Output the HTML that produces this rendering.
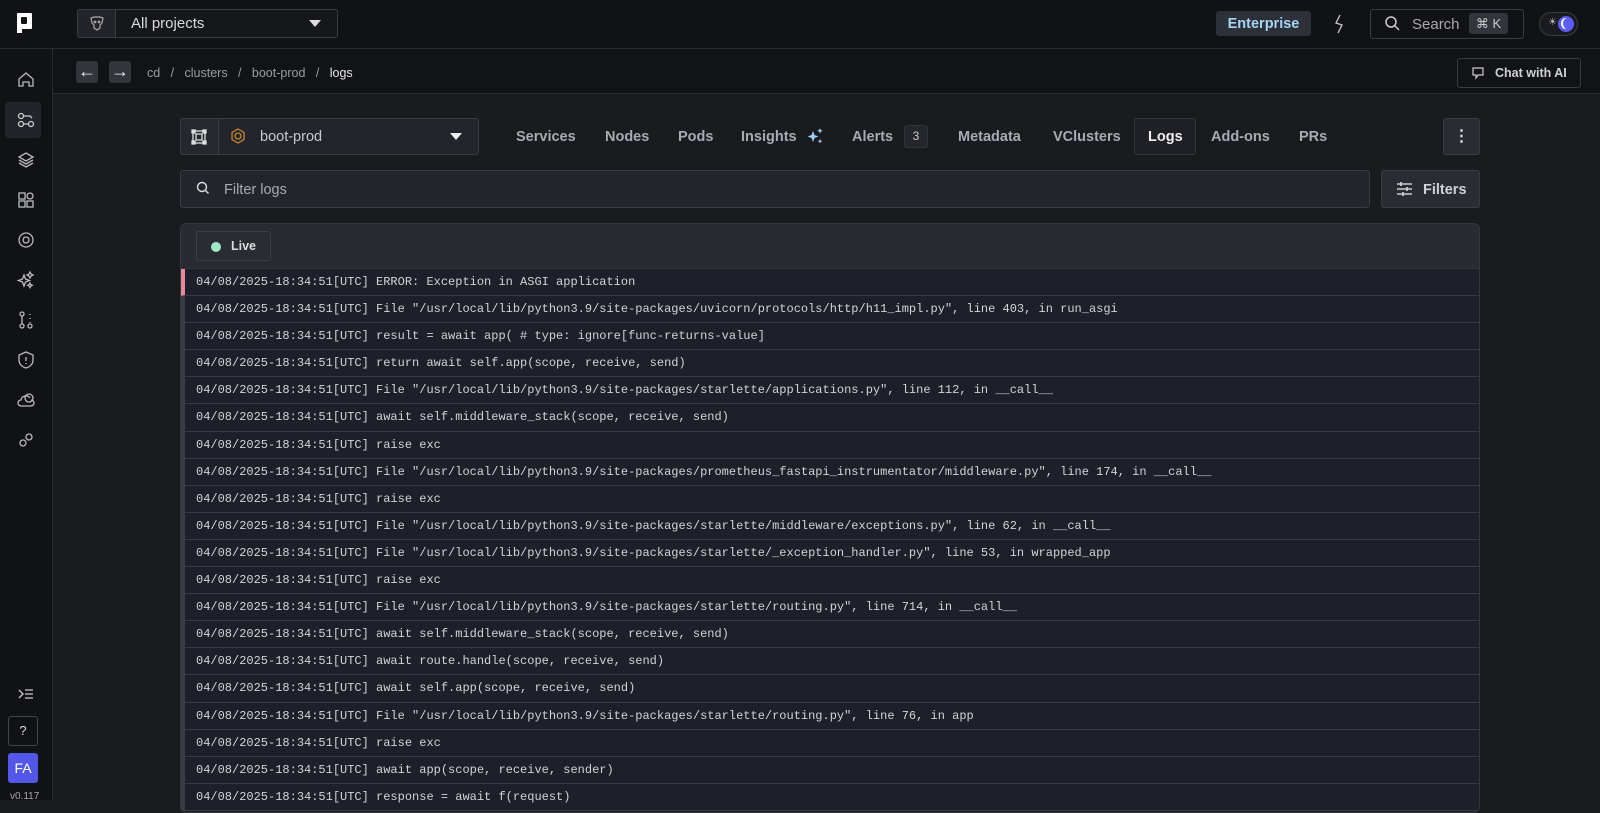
<!DOCTYPE html>
<html><head><meta charset="utf-8"><style>
*{box-sizing:border-box;margin:0;padding:0}
body{width:1600px;height:800px;overflow:hidden;background:#1a1b1f;font-family:"Liberation Sans",sans-serif;color:#c9cad0;position:relative}
.abs{position:absolute}
.top{left:0;top:0;width:1600px;height:49px;background:#111216;border-bottom:1px solid #2a2b31}
.side{left:0;top:49px;width:53px;height:751px;background:#111216;border-right:1px solid #2a2b31}
.crumb{left:53px;top:49px;width:1547px;height:45px;background:#121317;border-bottom:1px solid #2a2b31}
.ic{position:absolute;left:14px;width:24px;height:24px}
svg{display:block}
.tab{position:absolute;top:129px;font-size:14.5px;font-weight:bold;color:#a9abb4}
.logs{left:180px;top:223px;width:1300px;height:590px;border:1px solid #34363e;border-radius:6px;background:#1e2029;overflow:hidden}
.hdr{height:45px;background:#292b33;border-bottom:1px solid #34363e;position:relative}
.row{height:27.1px;border-bottom:1px solid #383a43;border-left:4px solid #3a3c45;font-family:"Liberation Mono",monospace;font-size:12px;line-height:26px;padding-left:11px;color:#d2d3d8;white-space:pre}
</style></head><body>
<div class="abs top"></div>
<div class="abs side"></div>
<div class="abs crumb"></div>
<!-- logo -->
<div class="abs" style="left:17px;top:13px;width:15px;height:16px;background:#fff;border-radius:1px"></div>
<div class="abs" style="left:17px;top:27px;width:5px;height:6px;background:#fff"></div>
<div class="abs" style="left:21px;top:17px;width:6px;height:7px;background:#111216;border-radius:1px"></div>
<!-- project selector -->
<div class="abs" style="left:77px;top:9px;width:261px;height:29px;border:1px solid #3a3c44;border-radius:3px;background:#16171b"></div>
<div class="abs" style="left:77px;top:9px;width:39px;height:29px;border:1px solid #3a3c44;border-radius:3px 0 0 3px;background:#22242a"></div>
<svg class="abs" style="left:88px;top:14px" width="18" height="18" viewBox="0 0 18 18" fill="none" stroke="#aaa" stroke-width="1.2"><path d="M3 4l3-1h6l3 1-1 5-2 2v3l-3 2-3-2v-3L4 9z"/><circle cx="7" cy="8" r=".8"/><circle cx="11" cy="8" r=".8"/></svg>
<div class="abs" style="left:131px;top:15px;font-size:15px;color:#d8d9de">All projects</div>
<div class="abs" style="left:309px;top:20px;border-left:6px solid transparent;border-right:6px solid transparent;border-top:7px solid #ddd"></div>
<!-- right top -->
<div class="abs" style="left:1216px;top:11px;width:95px;height:25px;background:#2b3039;border-radius:3px;color:#a8d4f4;font-weight:bold;font-size:14.5px;text-align:center;line-height:26px">Enterprise</div>
<svg class="abs" style="left:1333px;top:14px" width="12" height="20" viewBox="0 0 12 20" fill="none" stroke="#ccc" stroke-width="1.3"><path d="M7 1L3 9l6 2-4 8"/></svg>
<div class="abs" style="left:1370px;top:9px;width:154px;height:30px;border:1px solid #3a3c44;border-radius:3px"></div>
<svg class="abs" style="left:1384px;top:15px" width="18" height="18" viewBox="0 0 18 18" fill="none" stroke="#ccc" stroke-width="1.5"><circle cx="7" cy="7" r="5"/><path d="M11 11l4 4"/></svg>
<div class="abs" style="left:1412px;top:16px;font-size:15px;color:#aaa">Search</div>
<div class="abs" style="left:1469px;top:13px;width:39px;height:21px;background:#33353d;border-radius:3px;font-size:13px;color:#ccc;text-align:center;line-height:22px">⌘ K</div>
<div class="abs" style="left:1539px;top:12px;width:39px;height:24px;border:1px solid #3a3c44;border-radius:12px;background:#1a1b20"></div>
<div class="abs" style="left:1548px;top:17px;font-size:10px;color:#bbb">☀</div>
<div class="abs" style="left:1558px;top:16px;width:16px;height:16px;border-radius:50%;background:#5b5ef0"></div>
<div class="abs" style="left:1563px;top:18px;width:9px;height:11px;border-radius:50%;box-shadow:-2px 0 0 0 #fff"></div>
<!-- breadcrumb -->
<div class="abs" style="left:76px;top:61px;width:22px;height:22px;background:#33353d;border-radius:3px;color:#eee;font-size:18px;text-align:center;line-height:21px">←</div>
<div class="abs" style="left:109px;top:61px;width:22px;height:22px;background:#33353d;border-radius:3px;color:#eee;font-size:18px;text-align:center;line-height:21px">→</div>
<div class="abs" style="left:147px;top:66px;font-size:12.5px;color:#9a9ca4">cd &nbsp; / &nbsp; clusters &nbsp; / &nbsp; boot-prod &nbsp; / &nbsp; <span style="color:#e6e7ea">logs</span></div>
<div class="abs" style="left:1457px;top:58px;width:124px;height:30px;border:1px solid #3a3c44;border-radius:3px;font-size:12.5px;font-weight:bold;color:#d0d1d6;line-height:29px;padding-left:37px">Chat with AI</div>
<svg class="abs" style="left:1471px;top:66px" width="14" height="14" viewBox="0 0 14 14" fill="none" stroke="#ccc" stroke-width="1.2"><path d="M2 2h10v7H7l-2 3V9H2z"/></svg>
<!-- sidebar icons -->
<svg class="ic" style="top:68px" viewBox="0 0 24 24" fill="none" stroke="#bbb" stroke-width="1.3"><path d="M5 11l7-6 7 6v7h-4v-4h-6v4H5z"/></svg>
<div class="abs" style="left:5px;top:102px;width:36px;height:36px;background:#22242b;border-radius:3px"></div>
<svg class="ic" style="top:108px" viewBox="0 0 24 24" fill="none" stroke="#ccc" stroke-width="1.3"><circle cx="7" cy="8" r="2.5"/><circle cx="7" cy="16" r="2.5"/><circle cx="17" cy="16" r="2.5"/><path d="M10 8h6l2 2M10 16h4"/></svg>
<svg class="ic" style="top:148px" viewBox="0 0 24 24" fill="none" stroke="#bbb" stroke-width="1.3"><path d="M12 5l7 4-7 4-7-4zM5 12l7 4 7-4M5 15l7 4 7-4"/></svg>
<svg class="ic" style="top:188px" viewBox="0 0 24 24" fill="none" stroke="#bbb" stroke-width="1.3"><rect x="5" y="5" width="6" height="6"/><rect x="5" y="13" width="6" height="6"/><rect x="13" y="13" width="6" height="6"/><circle cx="16" cy="8" r="3"/></svg>
<svg class="ic" style="top:228px" viewBox="0 0 24 24" fill="none" stroke="#bbb" stroke-width="1.3"><circle cx="12" cy="12" r="7"/><circle cx="12" cy="12" r="3"/></svg>
<svg class="ic" style="top:268px" viewBox="0 0 24 24" fill="none" stroke="#bbb" stroke-width="1.3"><path d="M10 7l1.5 4 4 1.5-4 1.5-1.5 4-1.5-4-4-1.5 4-1.5zM16 4l1 2 2 1-2 1-1 2-1-2-2-1 2-1zM16 15l.8 1.5 1.5.8-1.5.8-.8 1.5-.8-1.5-1.5-.8 1.5-.8z"/></svg>
<svg class="ic" style="top:308px" viewBox="0 0 24 24" fill="none" stroke="#bbb" stroke-width="1.3"><circle cx="8" cy="6" r="2"/><circle cx="8" cy="18" r="2"/><path d="M8 8v8"/><circle cx="16" cy="18" r="2"/><path d="M16 6v1M16 10v1M16 14v1"/></svg>
<svg class="ic" style="top:348px" viewBox="0 0 24 24" fill="none" stroke="#bbb" stroke-width="1.3"><path d="M12 4l7 3v5c0 4-3 7-7 8-4-1-7-4-7-8V7z"/><path d="M12 9v4M12 15v1"/></svg>
<svg class="ic" style="top:388px" viewBox="0 0 24 24" fill="none" stroke="#bbb" stroke-width="1.3"><path d="M7 18a3 3 0 010-6 5 5 0 019-2M7 18h10a3 3 0 000-6"/><circle cx="15" cy="10" r="4"/></svg>
<svg class="ic" style="top:428px" viewBox="0 0 24 24" fill="none" stroke="#bbb" stroke-width="1.3"><circle cx="9" cy="15" r="3"/><circle cx="15" cy="9" r="3"/></svg>
<svg class="ic" style="top:683px" viewBox="0 0 24 24" fill="none" stroke="#ccc" stroke-width="1.3"><path d="M5 7l4 4-4 4M11 7h8M11 11h8M11 15h8"/></svg>
<div class="abs" style="left:8px;top:716px;width:30px;height:30px;border:1px solid #44464e;border-radius:3px;text-align:center;line-height:28px;font-size:13px;color:#ddd">?</div>
<div class="abs" style="left:8px;top:753px;width:30px;height:30px;background:#5357e8;border-radius:3px;text-align:center;line-height:30px;font-size:14px;color:#fff">FA</div>
<div class="abs" style="left:10px;top:791px;font-size:10px;color:#aaa">v0.117</div>
<!-- cluster selector -->
<div class="abs" style="left:180px;top:118px;width:299px;height:37px;border:1px solid #3a3c44;border-radius:3px;background:#23252c"></div>
<div class="abs" style="left:180px;top:118px;width:39px;height:37px;border:1px solid #3a3c44;border-radius:3px 0 0 3px;background:#26282f"></div>
<svg class="abs" style="left:191px;top:129px" width="16" height="16" viewBox="0 0 16 16" fill="none" stroke="#ddd" stroke-width="1.3"><rect x="2" y="2" width="12" height="12"/><rect x="5" y="5" width="6" height="6"/><rect x="1" y="1" width="3" height="3" fill="#ddd"/><rect x="12" y="1" width="3" height="3" fill="#ddd"/><rect x="1" y="12" width="3" height="3" fill="#ddd"/><rect x="12" y="12" width="3" height="3" fill="#ddd"/></svg>
<svg class="abs" style="left:230px;top:128px" width="16" height="16" viewBox="0 0 16 16" fill="none" stroke="#c8842e" stroke-width="1.3"><path d="M8 1l6 3.5v7L8 15l-6-3.5v-7z"/><circle cx="8" cy="8" r="3"/></svg>
<div class="abs" style="left:260px;top:129px;font-size:14.5px;color:#c8c9ce">boot-prod</div>
<div class="abs" style="left:450px;top:133px;border-left:6px solid transparent;border-right:6px solid transparent;border-top:7px solid #eee"></div>
<!-- tabs -->
<div class="tab" style="left:516px">Services</div>
<div class="tab" style="left:605px">Nodes</div>
<div class="tab" style="left:678px">Pods</div>
<div class="tab" style="left:741px">Insights</div>
<svg class="abs" style="left:806px;top:127px" width="18" height="18" viewBox="0 0 18 18" fill="#9ad0f5"><path d="M7 4l1.5 4 4 1.5-4 1.5L7 15l-1.5-4-4-1.5 4-1.5zM14 1l.8 2 2 .8-2 .8-.8 2-.8-2-2-.8 2-.8zM14 12l.7 1.5 1.5.7-1.5.7-.7 1.5-.7-1.5-1.5-.7 1.5-.7z"/></svg>
<div class="tab" style="left:852px">Alerts</div>
<div class="abs" style="left:904px;top:125px;width:24px;height:23px;background:#24262c;border:1px solid #33353c;border-radius:3px;font-size:12px;text-align:center;line-height:21px;color:#ccc">3</div>
<div class="tab" style="left:958px">Metadata</div>
<div class="tab" style="left:1053px">VClusters</div>
<div class="abs" style="left:1134px;top:118px;width:62px;height:37px;border:1px solid #33353c;border-radius:3px;background:#1e2026"></div>
<div class="tab" style="left:1148px;color:#eee">Logs</div>
<div class="tab" style="left:1211px">Add-ons</div>
<div class="tab" style="left:1299px">PRs</div>
<div class="abs" style="left:1443px;top:118px;width:37px;height:37px;border:1px solid #3a3c44;border-radius:3px;background:#2a2c33;color:#ddd;text-align:center;line-height:35px;font-size:16px;font-weight:bold">⋮</div>
<!-- filter -->
<div class="abs" style="left:180px;top:170px;width:1190px;height:38px;border:1px solid #3a3c44;border-radius:3px;background:#23252d"></div>
<svg class="abs" style="left:196px;top:181px" width="16" height="16" viewBox="0 0 16 16" fill="none" stroke="#ddd" stroke-width="1.4"><circle cx="6" cy="6" r="4.5"/><path d="M9.5 9.5l3 3"/></svg>
<div class="abs" style="left:224px;top:182px;font-size:14.5px;color:#a8aab2">Filter logs</div>
<div class="abs" style="left:1381px;top:170px;width:99px;height:38px;border:1px solid #3a3c44;border-radius:3px;background:#2a2c33"></div>
<svg class="abs" style="left:1396px;top:181px" width="17" height="16" viewBox="0 0 17 16" fill="none" stroke="#ccc" stroke-width="1.4"><path d="M1 3h15M1 8h15M1 13h15"/><path d="M5 1v4M11 6v4M7 11v4" stroke-width="1.8"/></svg>
<div class="abs" style="left:1423px;top:182px;font-size:14.5px;font-weight:bold;color:#d0d1d6">Filters</div>
<!-- logs -->
<div class="abs logs">
<div class="hdr"><div style="position:absolute;left:15px;top:7px;width:75px;height:30px;border:1px solid #3d3f47;border-radius:3px;background:#2a2c33"><div style="position:absolute;left:14px;top:10px;width:10px;height:10px;border-radius:50%;background:#9ee8c8"></div><div style="position:absolute;left:34px;top:7px;font-size:12.5px;font-weight:bold;color:#ddd">Live</div></div></div>
<div class="row" style="border-left-color:#e58a96">04/08/2025-18:34:51[UTC] ERROR: Exception in ASGI application</div>
<div class="row">04/08/2025-18:34:51[UTC] File "/usr/local/lib/python3.9/site-packages/uvicorn/protocols/http/h11_impl.py", line 403, in run_asgi</div>
<div class="row">04/08/2025-18:34:51[UTC] result = await app( # type: ignore[func-returns-value]</div>
<div class="row">04/08/2025-18:34:51[UTC] return await self.app(scope, receive, send)</div>
<div class="row">04/08/2025-18:34:51[UTC] File "/usr/local/lib/python3.9/site-packages/starlette/applications.py", line 112, in __call__</div>
<div class="row">04/08/2025-18:34:51[UTC] await self.middleware_stack(scope, receive, send)</div>
<div class="row">04/08/2025-18:34:51[UTC] raise exc</div>
<div class="row">04/08/2025-18:34:51[UTC] File "/usr/local/lib/python3.9/site-packages/prometheus_fastapi_instrumentator/middleware.py", line 174, in __call__</div>
<div class="row">04/08/2025-18:34:51[UTC] raise exc</div>
<div class="row">04/08/2025-18:34:51[UTC] File "/usr/local/lib/python3.9/site-packages/starlette/middleware/exceptions.py", line 62, in __call__</div>
<div class="row">04/08/2025-18:34:51[UTC] File "/usr/local/lib/python3.9/site-packages/starlette/_exception_handler.py", line 53, in wrapped_app</div>
<div class="row">04/08/2025-18:34:51[UTC] raise exc</div>
<div class="row">04/08/2025-18:34:51[UTC] File "/usr/local/lib/python3.9/site-packages/starlette/routing.py", line 714, in __call__</div>
<div class="row">04/08/2025-18:34:51[UTC] await self.middleware_stack(scope, receive, send)</div>
<div class="row">04/08/2025-18:34:51[UTC] await route.handle(scope, receive, send)</div>
<div class="row">04/08/2025-18:34:51[UTC] await self.app(scope, receive, send)</div>
<div class="row">04/08/2025-18:34:51[UTC] File "/usr/local/lib/python3.9/site-packages/starlette/routing.py", line 76, in app</div>
<div class="row">04/08/2025-18:34:51[UTC] raise exc</div>
<div class="row">04/08/2025-18:34:51[UTC] await app(scope, receive, sender)</div>
<div class="row">04/08/2025-18:34:51[UTC] response = await f(request)</div>
</div>
</body></html>
